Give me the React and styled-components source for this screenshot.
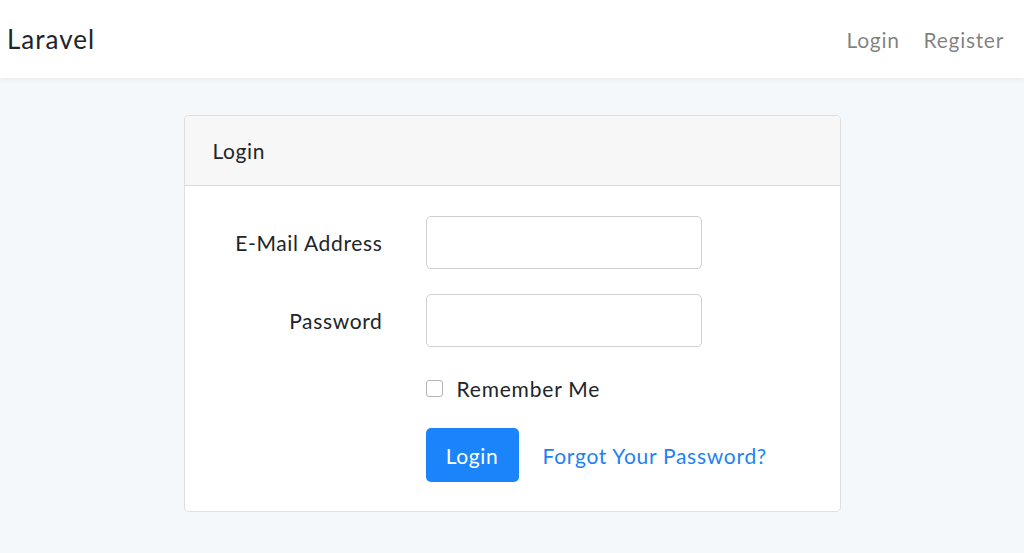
import React from "react";
import styled, { createGlobalStyle } from "styled-components";

const Global = createGlobalStyle`
  html, body { margin: 0; padding: 0; }
  body {
    background: #f5f8fa;
    font-family: "Lato", "Open Sans", sans-serif;
    color: #212529;
    -webkit-font-smoothing: antialiased;
  }
  * { box-sizing: border-box; }
`;

const Navbar = styled.nav`
  height: 78px;
  background: #fff;
  box-shadow: 0 2px 5px rgba(0, 0, 0, 0.05);
  display: flex;
  align-items: center;
  justify-content: space-between;
  padding: 0 20px 0 7px;
`;

const Brand = styled.a`
  font-size: 26px;
  color: #212529;
  text-decoration: none;
  letter-spacing: 1px;
`;

const NavLinks = styled.div`
  display: flex;
  gap: 24px;
`;

const NavLink = styled.a`
  font-size: 21px;
  letter-spacing: 0.7px;
  color: rgba(0, 0, 0, 0.5);
  text-decoration: none;
`;

const Main = styled.main`
  display: flex;
  justify-content: center;
  padding-top: 37px;
`;

const Card = styled.div`
  width: 657px;
  background: #fff;
  border: 1px solid rgba(0, 0, 0, 0.125);
  border-radius: 5px;
  overflow: hidden;
`;

const CardHeader = styled.div`
  height: 70px;
  background: #f7f7f7;
  border-bottom: 1px solid rgba(0, 0, 0, 0.125);
  display: flex;
  align-items: center;
  padding: 0 28px;
  font-size: 21px;
  letter-spacing: 0.6px;
`;

const CardBody = styled.form`
  padding: 30px 0 29px;
  display: flex;
  flex-direction: column;
  gap: 25px;
`;

const Row = styled.div`
  display: flex;
  align-items: center;
  gap: 43px;
`;

const Label = styled.label`
  width: 198px;
  text-align: right;
  font-size: 21px;
  letter-spacing: 0.65px;
`;

const Input = styled.input`
  width: 276px;
  height: 53px;
  border: 1px solid #ccd0d2;
  border-radius: 5px;
  background: #fff;
  font: inherit;
  padding: 0 16px;
`;

const Offset = styled.div`
  margin-left: 241px;
  display: flex;
  align-items: center;
  gap: ${(p) => p.$gap || 0}px;
`;

const CheckRow = styled(Offset)`
  height: 32px;
  margin-bottom: -1px;
`;

const Check = styled.span`
  width: 17px;
  height: 17px;
  border: 1px solid #b4b4b4;
  border-radius: 3px;
  background: #fff;
`;

const CheckLabel = styled.span`
  font-size: 21px;
  letter-spacing: 0.8px;
`;

const Button = styled.button`
  width: 93px;
  height: 54px;
  background: #1b84fb;
  color: #fff;
  border: none;
  border-radius: 5px;
  font: inherit;
  font-size: 21px;
  letter-spacing: 0.6px;
`;

const Link = styled.a`
  font-size: 21px;
  letter-spacing: 0.72px;
  color: #1f82f3;
  text-decoration: none;
`;

export default function App() {
  return (
    <>
      <Global />
      <Navbar>
        <Brand>Laravel</Brand>
        <NavLinks>
          <NavLink>Login</NavLink>
          <NavLink>Register</NavLink>
        </NavLinks>
      </Navbar>
      <Main>
        <Card>
          <CardHeader>Login</CardHeader>
          <CardBody onSubmit={(e) => e.preventDefault()}>
            <Row>
              <Label>E-Mail Address</Label>
              <Input type="email" />
            </Row>
            <Row>
              <Label>Password</Label>
              <Input type="password" />
            </Row>
            <CheckRow $gap={14}>
              <Check />
              <CheckLabel>Remember Me</CheckLabel>
            </CheckRow>
            <Offset $gap={24}>
              <Button type="submit">Login</Button>
              <Link>Forgot Your Password?</Link>
            </Offset>
          </CardBody>
        </Card>
      </Main>
    </>
  );
}
